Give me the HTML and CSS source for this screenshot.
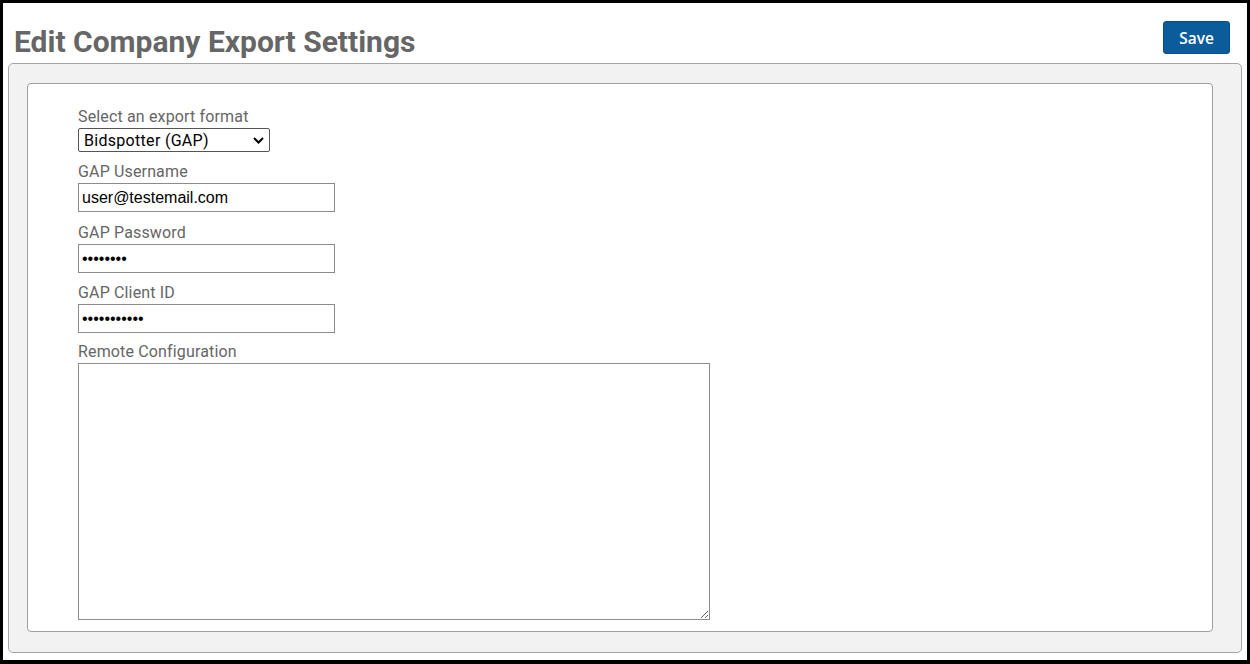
FILE: index.html
```html
<!DOCTYPE html>
<html lang="en">
<head>
<meta charset="utf-8">
<title>Edit Company Export Settings</title>
<link rel="stylesheet" href="styles.css">
</head>
<body>
<div class="frame">
  <header class="page-header">
    <h1 class="page-title">Edit Company Export Settings</h1>
    <button class="btn-save" type="button">Save</button>
  </header>
  <section class="outer-panel">
    <div class="inner-panel">
      <form class="settings-form">
        <div class="form-group">
          <label class="field-label" for="fmt">Select an export format</label>
          <div class="select-wrap">
            <select id="fmt" class="field-select">
              <option>Bidspotter (GAP)</option>
            </select>
            <svg class="chevron" width="11" height="7" viewBox="0 0 11 7"><path d="M1 1 L5.5 5.5 L10 1" fill="none" stroke="#000" stroke-width="2"/></svg>
          </div>
        </div>
        <div class="form-group wide-gap">
          <label class="field-label" for="user">GAP Username</label>
          <input id="user" class="field-input" type="text" value="user@testemail.com">
        </div>
        <div class="form-group">
          <label class="field-label" for="pass">GAP Password</label>
          <input id="pass" class="field-input" type="password" value="12345678">
        </div>
        <div class="form-group tight-gap">
          <label class="field-label" for="client">GAP Client ID</label>
          <input id="client" class="field-input" type="password" value="12345678901">
        </div>
        <div class="form-group">
          <label class="field-label" for="remote">Remote Configuration</label>
          <textarea id="remote" class="field-textarea"></textarea>
        </div>
      </form>
    </div>
  </section>
</div>
</body>
</html>
```

FILE: styles.css
```css
* { box-sizing: border-box; }
html, body { margin: 0; padding: 0; background: #000; }
.frame {
  width: 1250px;
  height: 664px;
  background: #fff;
  border-style: solid;
  border-color: #000;
  border-width: 3px 3px 4px 3px;
  padding: 0 5px;
  display: flex;
  flex-direction: column;
  font-family: Roboto, "Liberation Sans", sans-serif;
}
.page-header {
  height: 60px;
  display: flex;
  justify-content: space-between;
  align-items: flex-start;
  flex-shrink: 0;
}
.page-title {
  margin: 21px 0 0 6px;
  font-family: Roboto, sans-serif;
  font-weight: 700;
  font-size: 30px;
  line-height: 35px;
  color: #666;
}
.btn-save {
  margin: 18px 12px 0 0;
  width: 67px;
  height: 33px;
  border: 1px solid #08508a;
  border-radius: 3px;
  background: #0b5c9b;
  color: #fff;
  font-family: "Open Sans", sans-serif;
  font-weight: 600;
  font-size: 15.5px;
  padding: 0;
}
.outer-panel {
  height: 590px;
  background: #f2f2f2;
  border: 1px solid #a6a6a6;
  border-radius: 5px;
  padding: 19px 28px 20px 18px;
  flex-shrink: 0;
}
.inner-panel {
  height: 100%;
  background: #fff;
  border: 1px solid #a0a0a0;
  border-radius: 4px;
  padding: 23px 50px 0 50px;
}
.settings-form { margin: 0; }
.form-group { margin-bottom: 10px; }
.form-group.wide-gap { margin-bottom: 11px; }
.form-group.tight-gap { margin-bottom: 9px; }
.field-label {
  display: block;
  font-size: 16px;
  line-height: 19px;
  color: #666;
  letter-spacing: 0.15px;
  margin-bottom: 2px;
}
.select-wrap {
  position: relative;
  width: 192px;
  height: 24px;
}
.field-select {
  appearance: none;
  -webkit-appearance: none;
  width: 192px;
  height: 24px;
  border: 1px solid #555;
  border-radius: 2px;
  background: #fff;
  color: #000;
  font-family: Roboto, sans-serif;
  font-size: 16px;
  letter-spacing: 0.3px;
  padding: 0 0 0 5px;
  margin: 0;
}
.chevron {
  position: absolute;
  right: 6px;
  top: 9px;
  pointer-events: none;
}
.field-input {
  display: block;
  width: 257px;
  height: 29px;
  border: 1px solid #8c8c8c;
  border-radius: 0;
  padding: 0 3px;
  margin: 0;
  font-family: "Liberation Sans", Arial, sans-serif;
  font-size: 16px;
  color: #000;
  background: #fff;
}
.field-textarea {
  display: block;
  width: 632px;
  height: 257px;
  border: 1px solid #8c8c8c;
  border-radius: 0;
  margin: 0;
  padding: 2px;
  font-family: "Liberation Sans", sans-serif;
  font-size: 16px;
  background: #fff;
}
```
